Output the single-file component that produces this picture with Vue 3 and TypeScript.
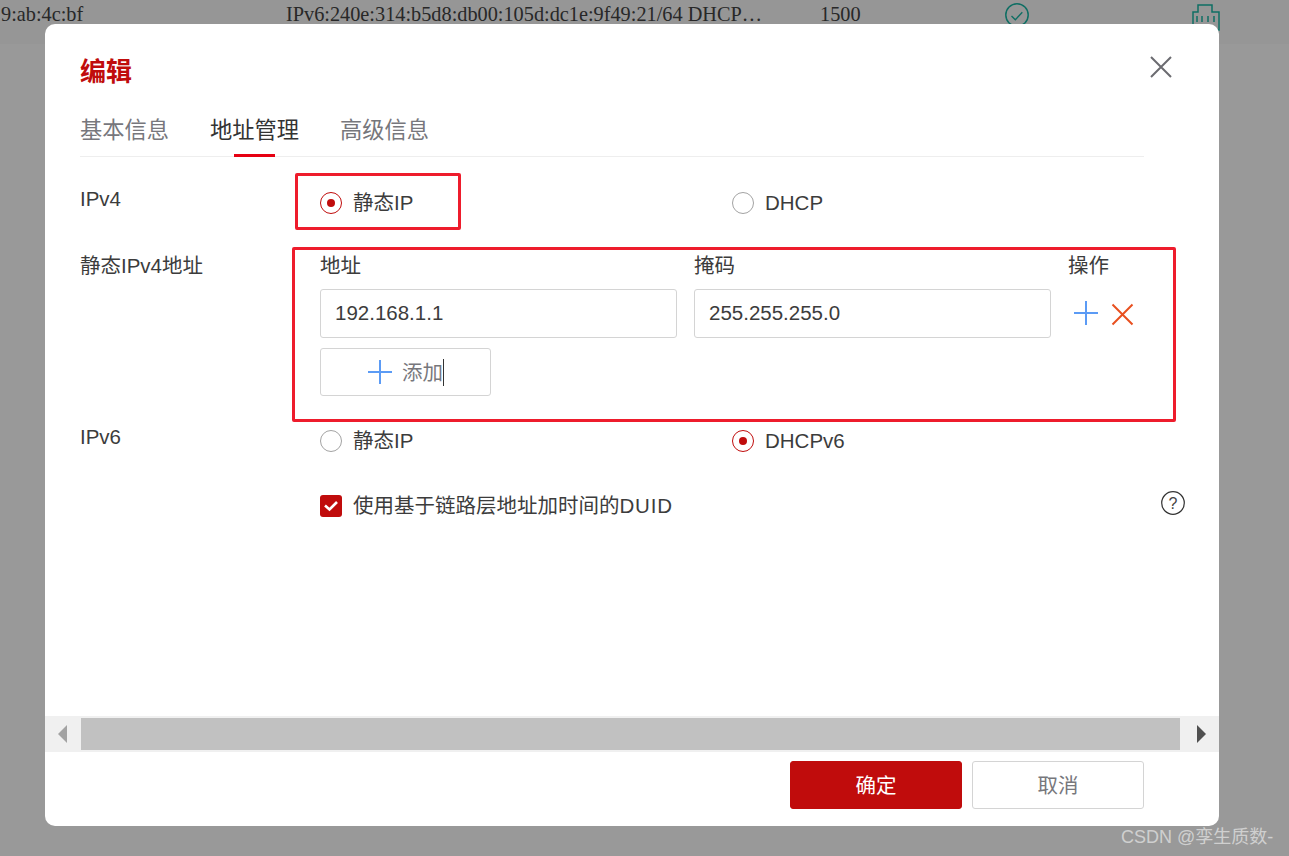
<script setup lang="ts">
const tabs = ['基本信息', '地址管理', '高级信息']
</script>

<template>
  <div class="page">
    <div class="table-row">
      <span class="cell-mac">9:ab:4c:bf</span>
      <span class="cell-ip">IPv6:240e:314:b5d8:db00:105d:dc1e:9f49:21/64 DHCP…</span>
      <span class="cell-mtu">1500</span>
      <svg class="cell-check" width="26" height="26" viewBox="0 0 26 26" fill="none">
        <circle cx="13" cy="13" r="11.2" stroke="#19b8a6" stroke-width="1.5" />
        <path d="M7.5 14l3.8 3.8 7-7.5" stroke="#19b8a6" stroke-width="1.4" />
      </svg>
      <svg class="cell-port" width="28" height="28" viewBox="0 0 28 28" fill="none" stroke="#19b8a6" stroke-width="1.5">
        <path d="M6 8V1h14v7h7v18H1V8z" />
        <path d="M5 12v6M10 12v6M16 12v6M22 12v6" />
      </svg>
    </div>

    <div class="overlay">
      <div class="dialog">
        <div class="head">
          <h2 class="title">编辑</h2>
          <svg class="close" width="24" height="24" viewBox="0 0 24 24" fill="none" stroke="#6b6b70" stroke-width="2">
            <path d="M2 2l20 20M22 2L2 22" />
          </svg>
        </div>
        <div class="tabs">
          <div v-for="(t, i) in tabs" :key="t" class="tab" :class="{ active: i === 1 }">{{ t }}</div>
        </div>

        <div class="body">
          <div class="row row-v4">
            <div class="label">IPv4</div>
            <div class="radios">
              <label class="radio"><i class="dot on"></i>静态IP</label>
              <label class="radio"><i class="dot"></i>DHCP</label>
            </div>
          </div>

          <div class="row row-static">
            <div class="label">静态IPv4地址</div>
            <div class="static">
              <div class="cols heads">
                <span>地址</span>
                <span>掩码</span>
                <span>操作</span>
              </div>
              <div class="cols">
                <div class="input">192.168.1.1</div>
                <div class="input">255.255.255.0</div>
                <div class="ops">
                  <svg class="op-add" width="24" height="24" viewBox="0 0 24 24" fill="none" stroke="#5b9bf5" stroke-width="2">
                    <path d="M12 0v24M0 12h24" />
                  </svg>
                  <svg class="op-del" width="23" height="23" viewBox="0 0 23 23" fill="none" stroke="#e8501f" stroke-width="2">
                    <path d="M1.5 1.5l20 20M21.5 1.5l-20 20" />
                  </svg>
                </div>
              </div>
              <div class="add">
                <svg width="24" height="24" viewBox="0 0 24 24" fill="none" stroke="#5b9bf5" stroke-width="2">
                  <path d="M12 0v24M0 12h24" />
                </svg>
                <span class="add-text">添加</span>
              </div>
            </div>
          </div>

          <div class="row row-v6">
            <div class="label">IPv6</div>
            <div class="radios">
              <label class="radio"><i class="dot"></i>静态IP</label>
              <label class="radio"><i class="dot on"></i>DHCPv6</label>
            </div>
          </div>

          <div class="row row-duid">
            <label class="check">
              <i class="box">
                <svg width="16" height="12" viewBox="0 0 16 12" fill="none" stroke="#fff" stroke-width="2.6">
                  <path d="M2 5.5l4.5 4L14 2" />
                </svg>
              </i>
              <span>使用基于链路层地址加时间的<span class="duid">DUID</span></span>
            </label>
            <svg class="help" width="24" height="24" viewBox="0 0 24 24" fill="none">
              <circle cx="12" cy="12" r="11.3" stroke="#333" stroke-width="1.2" />
              <text x="12" y="17.5" text-anchor="middle" class="help-mark">?</text>
            </svg>
          </div>
        </div>

        <div class="hscroll">
          <div class="arrow-box"><i class="arrow left"></i></div>
          <div class="thumb"></div>
          <div class="arrow-box"><i class="arrow right"></i></div>
        </div>

        <div class="foot">
          <button class="btn primary">确定</button>
          <button class="btn">取消</button>
        </div>

        <div class="note note-a"></div>
        <div class="note note-b"></div>
      </div>
      <div class="watermark">CSDN @孪生质数-</div>
    </div>
  </div>
</template>

<style scoped>
.page {
  position: relative;
  width: 1289px;
  height: 856px;
  overflow: hidden;
  background: #fff;
  font-family: "Liberation Sans", "Noto Sans CJK SC", sans-serif;
  color: #3c3c3c;
}
.table-row {
  position: relative;
  height: 44px;
  background: #fafafa;
  font-family: "Liberation Serif", serif;
  font-size: 20.3px;
  line-height: 28px;
  color: #444;
  display: flex;
  align-items: flex-start;
}
.cell-mac {
  width: 286px;
  padding-left: 1px;
  box-sizing: border-box;
}
.cell-ip {
  width: 534px;
  white-space: nowrap;
}
.cell-mtu {
  width: 184px;
}
.cell-check {
  margin-top: 2px;
  width: 26px;
}
.cell-port {
  margin-left: 162px;
  margin-top: 4px;
}
.overlay {
  position: absolute;
  inset: 0;
  background: rgba(0, 0, 0, 0.4);
}
.dialog {
  position: absolute;
  left: 45px;
  top: 24px;
  width: 1174px;
  height: 802px;
  background: #fff;
  border-radius: 10px;
  display: flex;
  flex-direction: column;
  overflow: hidden;
}
.head {
  display: flex;
  justify-content: space-between;
  padding: 32px 46px 0 35px;
  height: 44px;
}
.title {
  margin: 0;
  font-size: 26px;
  line-height: 32px;
  font-weight: 700;
  color: #c00c0c;
}
.close {
  margin-top: -1px;
}
.tabs {
  display: flex;
  gap: 41px;
  margin: 0 75px 0 35px;
  height: 57px;
  padding-top: 16px;
  box-sizing: border-box;
  border-bottom: 1px solid #eee;
}
.tab {
  position: relative;
  font-size: 22.25px;
  line-height: 30px;
  color: #77777c;
}
.tab.active {
  color: #333;
}
.tab.active::after {
  content: "";
  position: absolute;
  left: 24px;
  bottom: -1px;
  width: 41px;
  height: 3px;
  background: #e60012;
}
.body {
  flex: 1;
  padding: 0 34px 0 35px;
  font-size: 20.5px;
}
.row {
  display: flex;
}
.label {
  width: 240px;
  flex: none;
  line-height: 28px;
}
.radios {
  display: flex;
}
.radio {
  display: flex;
  align-items: center;
  gap: 11px;
  width: 412px;
  line-height: 28px;
}
.dot {
  box-sizing: border-box;
  width: 22px;
  height: 22px;
  border-radius: 50%;
  border: 1.5px solid #a3a3a3;
  display: flex;
  align-items: center;
  justify-content: center;
}
.dot.on {
  border-color: #c00c0c;
}
.dot.on::after {
  content: "";
  width: 8px;
  height: 8px;
  border-radius: 50%;
  background: #c00c0c;
}
.row-v4 {
  padding-top: 28px;
  height: 62px;
  box-sizing: border-box;
}
.row-v4 .radios {
  padding-top: 1px;
}
.row-v6 .radios {
  padding-top: 4px;
}
.row-static {
  padding-top: 32px;
}
.row-static .label {
  line-height: 30px;
}
.static {
  display: flex;
  flex-direction: column;
}
.cols {
  display: flex;
  gap: 17px;
}
.cols > * {
  width: 357px;
  flex: none;
}
.cols > :last-child {
  width: 60px;
}
.heads {
  line-height: 30px;
  height: 28px;
  margin-bottom: 10px;
}
.input {
  box-sizing: border-box;
  height: 49px;
  border: 1px solid #d4d4d4;
  border-radius: 3px;
  padding-left: 14px;
  line-height: 46px;
}
.ops {
  display: flex;
  align-items: center;
  gap: 13px;
  padding-left: 6px;
}
.op-add {
  margin-top: -2px;
}
.op-del {
  margin-top: 1px;
}
.add {
  box-sizing: border-box;
  margin-top: 10px;
  width: 171px;
  height: 48px;
  border: 1px solid #d4d4d4;
  border-radius: 3px;
  display: flex;
  align-items: center;
  padding-left: 47px;
  gap: 10px;
  color: #77777c;
}
.add-text {
  border-right: 1.5px solid #333;
  line-height: 27px;
  height: 27px;
}
.row-v6 {
  padding-top: 27px;
}
.row-duid {
  justify-content: space-between;
  padding: 37px 0 0 240px;
  align-items: center;
}
.check {
  display: flex;
  align-items: center;
  gap: 11px;
  line-height: 28px;
}
.duid {
  letter-spacing: 0.8px;
}
.box {
  width: 22px;
  height: 22px;
  border-radius: 3px;
  background: #c00c0c;
  display: flex;
  align-items: center;
  justify-content: center;
}
.help {
  margin-top: -7px;
}
.help-mark {
  font-size: 16px;
  fill: #444;
}
.hscroll {
  box-sizing: border-box;
  height: 36px;
  background: #f0f0f0;
  padding: 2px 0;
  display: flex;
}
.arrow-box {
  width: 36px;
  flex: none;
  display: flex;
  align-items: center;
  justify-content: center;
}
.thumb {
  flex: 1;
  background: #c1c1c1;
  margin-right: 3px;
}
.arrow {
  width: 0;
  height: 0;
  border-top: 9px solid transparent;
  border-bottom: 9px solid transparent;
}
.arrow.left {
  border-right: 9px solid #a3a3a3;
  margin-right: 2px;
}
.arrow.right {
  border-left: 9px solid #505050;
}
.foot {
  height: 74px;
  box-sizing: border-box;
  padding: 9px 75px 0 0;
  display: flex;
  justify-content: flex-end;
  gap: 10px;
}
.btn {
  width: 172px;
  height: 48px;
  padding: 0 0 3px;
  border: 1px solid #d4d4d4;
  border-radius: 3px;
  background: #fff;
  font: inherit;
  font-size: 20.5px;
  color: #77777c;
}
.btn.primary {
  background: #c00c0c;
  border-color: #c00c0c;
  color: #fff;
}
.note {
  position: absolute;
  box-sizing: border-box;
  border: 3px solid #ee1c2c;
  border-radius: 2px;
}
.note-a {
  left: 250px;
  top: 149px;
  width: 166px;
  height: 57px;
}
.note-b {
  left: 247px;
  top: 223px;
  width: 884px;
  height: 175px;
}
.watermark {
  position: absolute;
  left: 1121px;
  top: 826px;
  font-size: 18px;
  line-height: 22px;
  color: rgba(255, 255, 255, 0.55);
  white-space: nowrap;
}
</style>
